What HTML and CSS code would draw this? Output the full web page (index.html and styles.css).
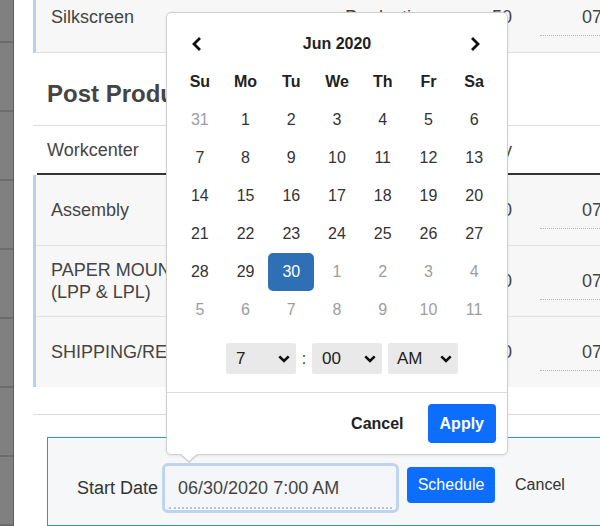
FILE: index.html
```html
<!DOCTYPE html>
<html lang="en">
<head>
<meta charset="utf-8">
<title>Schedule</title>
<link rel="stylesheet" href="styles.css">
</head>
<body>
<div class="app">
  <aside class="sidebar"></aside>
  <main class="main">
    <div class="group group-top">
      <div class="row row-top">
        <span class="c-name">Silkscreen</span>
        <span class="c-prod">Production</span>
        <span class="c-qty">50</span>
        <span class="c-date">07</span>
      </div>
    </div>
    <h2 class="section-title">Post Production</h2>
    <div class="thead">
      <span class="c-name">Workcenter</span>
      <span class="c-prod">Product</span>
      <span class="c-qty">Qty</span>
    </div>
    <div class="group">
      <div class="row">
        <span class="c-name">Assembly</span>
        <span class="c-prod">Production</span>
        <span class="c-qty">50</span>
        <span class="c-date">07</span>
      </div>
      <div class="row">
        <span class="c-name">PAPER MOUNTING<br>(LPP &amp; LPL)</span>
        <span class="c-prod">Production</span>
        <span class="c-qty">50</span>
        <span class="c-date">07</span>
      </div>
      <div class="row">
        <span class="c-name">SHIPPING/RECEIVING</span>
        <span class="c-prod">Production</span>
        <span class="c-qty">50</span>
        <span class="c-date">07</span>
      </div>
    </div>
    <div class="divider"></div>
    <div class="footer-wrap">
      <div class="schedule-bar">
        <label class="sb-label">Start Date</label>
        <div class="date-input">06/30/2020 7:00 AM</div>
        <button class="btn-primary btn-schedule">Schedule</button>
        <button class="btn-link">Cancel</button>
      </div>
    </div>
  </main>
</div>

<div class="picker">
  <div class="cal">
    <div class="cal-head">
      <span class="nav nav-prev"><svg width="12" height="16" viewBox="0 0 12 16"><path d="M9 2 L3 8 L9 14" fill="none" stroke="#111" stroke-width="2.8"/></svg></span>
      <span class="cal-title">Jun 2020</span>
      <span class="nav nav-next"><svg width="12" height="16" viewBox="0 0 12 16"><path d="M3 2 L9 8 L3 14" fill="none" stroke="#111" stroke-width="2.8"/></svg></span>
    </div>
    <div class="cal-grid">
      <span class="dow">Su</span><span class="dow">Mo</span><span class="dow">Tu</span><span class="dow">We</span><span class="dow">Th</span><span class="dow">Fr</span><span class="dow">Sa</span>
      <span class="day off">31</span><span class="day">1</span><span class="day">2</span><span class="day">3</span><span class="day">4</span><span class="day">5</span><span class="day">6</span>
      <span class="day">7</span><span class="day">8</span><span class="day">9</span><span class="day">10</span><span class="day">11</span><span class="day">12</span><span class="day">13</span>
      <span class="day">14</span><span class="day">15</span><span class="day">16</span><span class="day">17</span><span class="day">18</span><span class="day">19</span><span class="day">20</span>
      <span class="day">21</span><span class="day">22</span><span class="day">23</span><span class="day">24</span><span class="day">25</span><span class="day">26</span><span class="day">27</span>
      <span class="day">28</span><span class="day">29</span><span class="day active">30</span><span class="day off">1</span><span class="day off">2</span><span class="day off">3</span><span class="day off">4</span>
      <span class="day off">5</span><span class="day off">6</span><span class="day off">7</span><span class="day off">8</span><span class="day off">9</span><span class="day off">10</span><span class="day off">11</span>
    </div>
    <div class="time-row">
      <div class="sel"><span>7</span><svg width="12" height="8" viewBox="0 0 12 8"><path d="M1.3 1.3 L6 6 L10.7 1.3" fill="none" stroke="#111" stroke-width="2.6"/></svg></div>
      <span class="colon">:</span>
      <div class="sel"><span>00</span><svg width="12" height="8" viewBox="0 0 12 8"><path d="M1.3 1.3 L6 6 L10.7 1.3" fill="none" stroke="#111" stroke-width="2.6"/></svg></div>
      <div class="sel sel-ampm"><span>AM</span><svg width="12" height="8" viewBox="0 0 12 8"><path d="M1.3 1.3 L6 6 L10.7 1.3" fill="none" stroke="#111" stroke-width="2.6"/></svg></div>
    </div>
  </div>
  <div class="picker-foot">
    <button class="btn-cancel">Cancel</button>
    <button class="btn-primary btn-apply">Apply</button>
  </div>
</div>
</body>
</html>
```

FILE: styles.css
```css
* { box-sizing: border-box; }

html, body {
  margin: 0;
  padding: 0;
}

body {
  width: 600px;
  height: 526px;
  overflow: hidden;
  position: relative;
  background: #fff;
  font-family: "Liberation Sans", Arial, sans-serif;
  color: #444;
}

.app {
  display: flex;
  height: 526px;
}

.sidebar {
  width: 14px;
  flex: none;
  background-color: #808080;
  background-image: repeating-linear-gradient(to bottom,
    transparent 0, transparent 41px,
    #6c6c6c 41px, #6c6c6c 43px,
    transparent 43px, transparent 69px);
  border-right: 1px solid #5e5e5e;
}

.main {
  flex: 1;
  min-width: 0;
  padding-left: 19px;
  overflow: hidden;
}

/* table-like rows */
.group {
  background: #f7f7f7;
  border-left: 3px solid #b9d1e8;
}

.group-top {
  margin-top: -18px;
  border-bottom: 1px solid #dedede;
}

.row {
  display: flex;
  align-items: center;
  height: 71px;
  padding-left: 15px;
  font-size: 18px;
  line-height: 22px;
  white-space: nowrap;
  border-bottom: 1px solid #e2e2e2;
}

.row:last-child {
  border-bottom: none;
  height: 70px;
}

.row-top {
  height: 69px;
}

.c-name {
  width: 294px;
  flex: none;
}

.c-prod {
  width: 125px;
  flex: none;
}

.c-qty {
  width: 42px;
  flex: none;
  text-align: right;
}

.c-date {
  flex: none;
  width: 60px;
  margin-left: 28px;
  padding: 7px 0 7px 42px;
  border-bottom: 1px dotted #b5b5b5;
}

.section-title {
  margin: 0;
  height: 73px;
  padding: 27px 0 0 14px;
  font-size: 24px;
  line-height: 28px;
  font-weight: bold;
  color: #444;
  border-bottom: 1px solid #dedede;
  white-space: nowrap;
}

.thead {
  display: flex;
  align-items: center;
  height: 49px;
  margin-left: 4px;
  padding-left: 10px;
  border-bottom: 2px solid #333;
  font-size: 18px;
  line-height: 22px;
  white-space: nowrap;
}

.thead .c-name { width: 298px; }

.divider {
  margin-top: 27px;
  border-top: 1px solid #dcdcdc;
}

.footer-wrap {
  padding: 22px 0 0 14px;
}

.schedule-bar {
  display: flex;
  align-items: center;
  width: 600px;
  padding: 25px 0 12px 29px;
  background: #f5f7f9;
  border: 1px solid #2aa3a8;
}

.sb-label {
  font-size: 18px;
  color: #333;
  margin-right: 4px;
}

.date-input {
  position: relative;
  display: flex;
  align-items: center;
  width: 237px;
  height: 50px;
  padding-left: 13px;
  border: 3px solid #bfd5ef;
  border-radius: 6px;
  background: #f4f6f9;
  font-size: 18px;
  color: #444;
}

.date-input::after {
  content: "";
  position: absolute;
  left: 4px;
  right: 4px;
  bottom: 1px;
  border-bottom: 2px dotted #aec6e4;
}

button {
  font-family: inherit;
  border: none;
  cursor: pointer;
}

.btn-primary {
  background: #0d6efd;
  color: #fff;
  border-radius: 4px;
}

.btn-schedule {
  width: 88px;
  height: 36px;
  margin-left: 8px;
  margin-bottom: 6px;
  font-size: 16px;
  padding: 0;
}

.btn-link {
  background: transparent;
  margin-left: 20px;
  margin-bottom: 6px;
  padding: 0;
  font-size: 16px;
  color: #333;
}

/* date picker popup */
.picker {
  position: absolute;
  left: 166px;
  top: 12px;
  width: 342px;
  height: 443px;
  background: #fff;
  border: 1px solid #cfcfcf;
  border-radius: 5px;
  box-shadow: 0 1px 3px rgba(0, 0, 0, 0.08);
  color: #333;
}

.picker::before {
  content: "";
  position: absolute;
  left: 13px;
  bottom: -9px;
  border-left: 9px solid transparent;
  border-right: 9px solid transparent;
  border-top: 8px solid #cfcfcf;
}

.picker::after {
  content: "";
  position: absolute;
  left: 14px;
  bottom: -7px;
  border-left: 8px solid transparent;
  border-right: 8px solid transparent;
  border-top: 7px solid #fff;
}

.cal {
  padding: 12px 10px 0;
}

.cal-head {
  display: grid;
  grid-template-columns: repeat(7, 1fr);
  height: 38px;
  align-items: center;
}

.nav {
  display: flex;
  align-items: center;
}

.nav-prev { margin-left: 14px; }
.nav-next { grid-column: 7; margin-left: 18px; }

.cal-title {
  grid-column: 2 / span 5;
  text-align: center;
  font-size: 16px;
  font-weight: bold;
  color: #222;
}

.cal-grid {
  display: grid;
  grid-template-columns: repeat(7, 1fr);
  grid-auto-rows: 38px;
}

.dow, .day {
  display: flex;
  align-items: center;
  justify-content: center;
  font-size: 16px;
}

.dow {
  font-weight: bold;
  color: #222;
}

.day { color: #333; }
.day.off { color: #9d9d9d; }

.day.active {
  background: #2f6fb6;
  color: #fff;
  border-radius: 5px;
}

.time-row {
  display: flex;
  align-items: center;
  margin-top: 14px;
  padding-left: 49px;
}

.sel {
  display: flex;
  align-items: center;
  justify-content: space-between;
  width: 70px;
  height: 31px;
  padding: 0 6px 0 10px;
  background: #e9e9e9;
  border-radius: 2px;
  font-size: 17px;
  color: #222;
}

.sel svg { margin-top: 1px; }

.colon {
  width: 16px;
  text-align: center;
  font-size: 16px;
  color: #333;
}

.sel-ampm {
  margin-left: 6px;
  padding-left: 9px;
}

.picker-foot {
  display: flex;
  justify-content: flex-end;
  align-items: center;
  gap: 24px;
  margin-top: 18px;
  padding: 11px 11px 0;
  border-top: 1px solid #dedede;
}

.btn-cancel {
  background: transparent;
  padding: 0;
  font-size: 16px;
  font-weight: bold;
  color: #222;
}

.btn-apply {
  height: 39px;
  padding: 0 12px;
  font-size: 16px;
  font-weight: bold;
}
```
